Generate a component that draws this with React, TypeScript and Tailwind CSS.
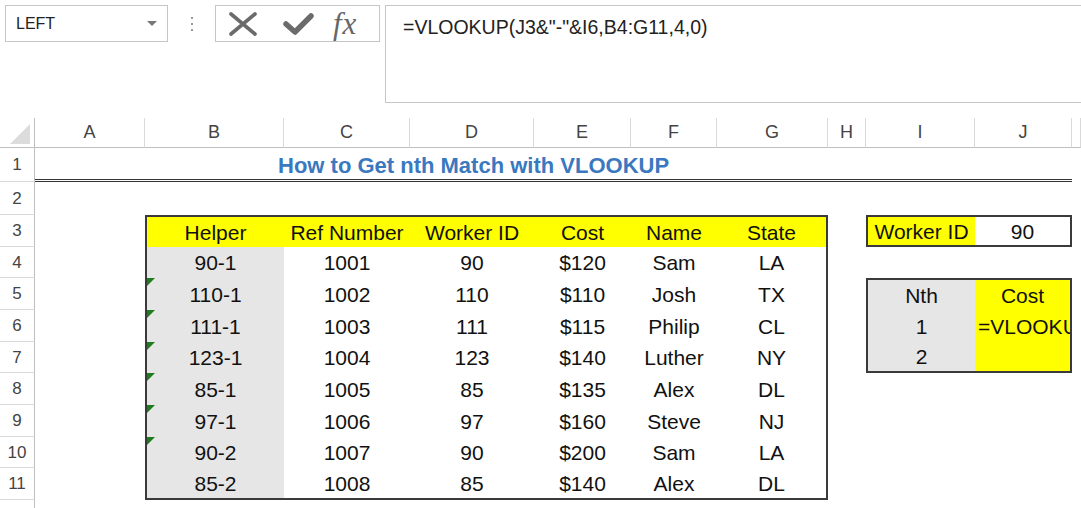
import React from 'react';

const colW = [
    'w-[110px]', 'w-[139px]', 'w-[126px]', 'w-[124px]', 'w-[97px]',
    'w-[86px]', 'w-[111px]', 'w-[38px]', 'w-[109px]', 'w-[97px]', 'w-[9px]',
];
const letters = ['A', 'B', 'C', 'D', 'E', 'F', 'G', 'H', 'I', 'J', ''];

const dataRows = [
    ['90-1', '1001', '90', '$120', 'Sam', 'LA'],
    ['110-1', '1002', '110', '$110', 'Josh', 'TX'],
    ['111-1', '1003', '111', '$115', 'Philip', 'CL'],
    ['123-1', '1004', '123', '$140', 'Luther', 'NY'],
    ['85-1', '1005', '85', '$135', 'Alex', 'DL'],
    ['97-1', '1006', '97', '$160', 'Steve', 'NJ'],
    ['90-2', '1007', '90', '$200', 'Sam', 'LA'],
    ['85-2', '1008', '85', '$140', 'Alex', 'DL'],
];

// side boxes on the right (columns I and J), keyed by row number
const sideCells: Record<number, { i?: string; j?: string; iBg?: string; jBg?: string; formula?: boolean }> = {
    3: { i: 'Worker ID', j: '90', iBg: 'bg-[#ffff00]', jBg: 'bg-white' },
    5: { i: 'Nth', j: 'Cost', iBg: 'bg-[#e6e6e6]', jBg: 'bg-[#ffff00]' },
    6: { i: '1', j: '=VLOOKU', iBg: 'bg-[#e6e6e6]', jBg: 'bg-[#ffff00]', formula: true },
    7: { i: '2', j: '', iBg: 'bg-[#e6e6e6]', jBg: 'bg-[#ffff00]' },
};

const RowHead: React.FC<{ n: number | string; h: string }> = ({ n, h }) => (
    <div className={`flex ${h} w-[35px] shrink-0 items-center justify-center border-b border-r border-b-[#dadada] border-r-[#bfbfbf] pt-[1px] text-[17px] text-[#444]`}>
        {n}
    </div>
);

const SheetRow: React.FC<{ r: number }> = ({ r }) => {
    const header = r === 3;
    const data = r >= 4 && r <= 11 ? dataRows[r - 4] : null;
    const side = sideCells[r];

    return (
        <div className="flex h-[31.67px]">
            <RowHead n={r <= 11 ? r : ''} h="h-[31.67px]" />
            {colW.map((w, c) => {
                let cls = `${w} relative flex shrink-0 items-center justify-center pt-[1px] text-[21px] text-[#111]`;
                let text = '';
                const inTable = c >= 1 && c <= 6 && r >= 3 && r <= 11;
                if (inTable) {
                    if (c === 1) cls += ' border-l-2 border-l-[#3a3a3a]';
                    if (c === 6) cls += ' border-r-2 border-r-[#3a3a3a]';
                    if (r === 3) cls += ' border-t-2 border-t-[#3a3a3a]';
                    if (r === 11) cls += ' border-b-2 border-b-[#3a3a3a]';
                    if (header) {
                        cls += ' bg-[#ffff00]';
                        text = ['Helper', 'Ref Number', 'Worker ID', 'Cost', 'Name', 'State'][c - 1];
                    } else if (data) {
                        if (c === 1) cls += ' bg-[#e6e6e6]';
                        text = data[c - 1];
                    }
                }
                if (side && (c === 8 || c === 9)) {
                    const firstRow = r === 3 || r === 5;
                    const lastRow = r === 3 || r === 7;
                    if (firstRow) cls += ' border-t-2 border-t-[#3a3a3a]';
                    if (lastRow) cls += ' border-b-2 border-b-[#3a3a3a]';
                    if (c === 8) {
                        cls += ` border-l-2 border-l-[#3a3a3a] ${side.iBg}`;
                        text = side.i ?? '';
                    } else {
                        cls += ` border-r-2 border-r-[#3a3a3a] ${side.jBg}`;
                        text = side.j ?? '';
                        if (side.formula) cls += ' justify-start overflow-hidden pl-[3px] text-[#2f7fd0]';
                    }
                }
                return (
                    <div key={c} className={cls}>
                        {c === 1 && r >= 5 && r <= 10 && (
                            <span className="absolute left-0 top-0 h-0 w-0 border-r-[8px] border-t-[8px] border-r-transparent border-t-[#1e7b1e]" />
                        )}
                        <span className="whitespace-nowrap">{text}</span>
                    </div>
                );
            })}
        </div>
    );
};

const App: React.FC = () => {
    return (
        <div className="h-[508px] w-[1081px] overflow-hidden bg-white font-['Liberation_Sans',Arial,sans-serif]">
            {/* formula bar */}
            <div className="flex h-[118px] items-start pl-[5px] pt-[5px]">
                <div className="flex h-[37px] w-[163px] shrink-0 items-center justify-between border border-[#c6c6c6] pl-[10px] pr-[10px]">
                    <span className="text-[16px] text-[#222]">LEFT</span>
                    <span className="h-0 w-0 border-l-[5px] border-r-[5px] border-t-[5px] border-l-transparent border-r-transparent border-t-[#777]" />
                </div>
                <div className="flex h-[37px] w-[47px] shrink-0 flex-col items-center justify-center gap-[4px]">
                    <span className="h-[2px] w-[2px] bg-[#999]" />
                    <span className="h-[2px] w-[2px] bg-[#999]" />
                    <span className="h-[2px] w-[2px] bg-[#999]" />
                </div>
                <div className="flex h-[37px] w-[165px] shrink-0 items-center border border-[#c6c6c6] pl-[13px]">
                    <svg width="28" height="24" viewBox="0 0 28 24">
                        <path d="M2 2 L26 22 M26 2 L2 22" stroke="#6b6b6b" strokeWidth="3.6" strokeLinecap="round" />
                    </svg>
                    <svg className="ml-[26px]" width="31" height="24" viewBox="0 0 31 24">
                        <path d="M3 12 L12 20 L28 4" stroke="#6b6b6b" strokeWidth="5.5" fill="none" strokeLinecap="round" strokeLinejoin="round" />
                    </svg>
                    <span className="ml-[19px] font-['Liberation_Serif',serif] text-[31px] italic leading-none tracking-[1px] text-[#666]">fx</span>
                </div>
                <div className="ml-[5px] h-[98px] flex-1 border border-r-0 border-[#c6c6c6] pl-[17px] pt-[7px] text-[19.5px] text-[#222]">
                    =VLOOKUP(J3&amp;"-"&amp;I6,B4:G11,4,0)
                </div>
            </div>

            {/* column headers */}
            <div className="flex h-[30px]">
                <div className="flex h-[30px] w-[35px] shrink-0 items-end justify-end border-b border-r border-b-[#bfbfbf] border-r-[#bfbfbf] pb-[3px] pr-[4px]">
                    <span className="h-0 w-0 border-b-[20px] border-l-[20px] border-b-[#dcdcdc] border-l-transparent" />
                </div>
                {colW.map((w, c) => (
                    <div key={c} className={`${w} flex h-[30px] shrink-0 items-center justify-center border-b border-r border-b-[#bfbfbf] border-r-[#d9d9d9] text-[18px] text-[#444]`}>
                        {letters[c]}
                    </div>
                ))}
            </div>

            {/* row 1: title */}
            <div className="flex h-[34px]">
                <RowHead n={1} h="h-[34px]" />
                <div className="flex h-[34px] w-[1037px] shrink-0 items-center border-b-[3px] border-double border-b-[#333] pl-[243px] pt-[4px] text-[22px] font-bold text-[#3a78c0]">
                    How to Get nth Match with VLOOKUP
                </div>
            </div>

            {/* row 2 */}
            <div className="flex h-[33px]">
                <RowHead n={2} h="h-[33px]" />
            </div>

            {[3, 4, 5, 6, 7, 8, 9, 10, 11, 12].map(r => (
                <SheetRow key={r} r={r} />
            ))}
        </div>
    );
};

export default App;
